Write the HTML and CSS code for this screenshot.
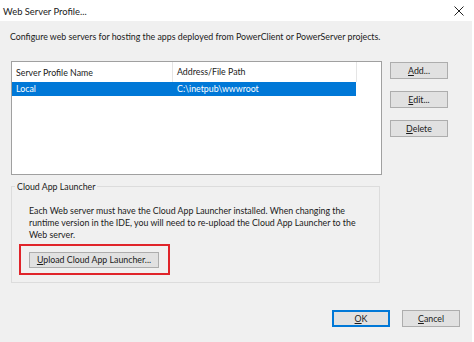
FILE: index.html
```html
<!DOCTYPE html>
<html lang="en">

<head>
    <meta charset="UTF-8">
    <title>Web Server Profile...</title>
    <link rel="stylesheet" href="styles.css">
</head>

<body>
    <div class="window">
        <div class="titlebar">
            <span class="title">Web Server Profile...</span>
            <svg class="close" width="10" height="10" viewBox="0 0 10 10">
                <path d="M0.5 0.5 L9.5 9.5 M9.5 0.5 L0.5 9.5" stroke="#222" stroke-width="1" fill="none" />
            </svg>
        </div>

        <div class="content">
            <p class="intro">Configure web servers for hosting the apps deployed from PowerClient or PowerServer projects.</p>

            <div class="top">
                <div class="list">
                    <div class="list-head">
                        <div class="col col-name">Server Profile Name</div>
                        <div class="col col-path">Address/File Path</div>
                    </div>
                    <div class="list-row selected">
                        <div class="col col-name">Local</div>
                        <div class="col col-path">C:\inetpub\wwwroot</div>
                    </div>
                </div>

                <div class="side">
                    <button class="btn"><u>A</u>dd...</button>
                    <button class="btn"><u>E</u>dit...</button>
                    <button class="btn"><u>D</u>elete</button>
                </div>
            </div>

            <fieldset class="group">
                <legend>Cloud App Launcher</legend>
                <p class="group-text">Each Web server must have the Cloud App Launcher installed. When changing the runtime version in the IDE, you will need to re-upload the Cloud App Launcher to the Web server.</p>
                <div class="highlight">
                    <button class="btn btn-wide"><u>U</u>pload Cloud App Launcher...</button>
                </div>
            </fieldset>

            <div class="footer">
                <button class="btn btn-default"><u>O</u>K</button>
                <button class="btn"><u>C</u>ancel</button>
            </div>
        </div>
    </div>
</body>

</html>
```

FILE: styles.css
```css
/* general */

body {
    margin: 0;
    background: #fff;
    font-family: 'Lato', 'Open Sans', sans-serif;
    font-size: 8.8px;
    color: #1a1a1a;
}

.window {
    width: 472px;
    height: 342px;
    background: #f0f0f0;
    display: flex;
    flex-direction: column;
}

.titlebar {
    height: 21px;
    flex-shrink: 0;
    background: #fff;
    display: flex;
    align-items: center;
    justify-content: space-between;
    padding: 1px 8px 0 3px;
    box-sizing: border-box;
}

.title {
    font-size: 9.4px;
}

.content {
    padding: 0 11px;
    flex: 1;
    display: flex;
    flex-direction: column;
}

.intro {
    margin: 10px 0 0 -1px;
    line-height: 12px;
    white-space: nowrap;
}

/* list and side buttons */

.top {
    display: flex;
    margin-top: 18px;
}

.list {
    width: 369px;
    height: 112px;
    background: #fff;
    border: 1px solid #a0a0a0;
}

.list-head,
.list-row {
    display: flex;
}

.list-head {
    height: 20px;
    align-items: center;
}

.list-head .col-path {
    border-left: 1px solid #e5e5e5;
    border-right: 1px solid #e5e5e5;
    height: 20px;
    line-height: 20px;
    padding-left: 4px;
    width: 179px;
}

.list-row {
    height: 14px;
    line-height: 14px;
    width: 344px;
}

.selected {
    background: #0078d7;
    color: #fff;
}

.col-name {
    width: 156px;
    padding-left: 4px;
}

.list-row .col-path {
    padding-left: 5px;
}

.side {
    display: flex;
    flex-direction: column;
    gap: 12px;
    margin-left: 8px;
    margin-top: 1px;
}

.btn {
    width: 58px;
    height: 17px;
    padding: 0;
    background: #e1e1e1;
    border: 1px solid #adadad;
    font-family: inherit;
    font-size: 8.8px;
    color: #1a1a1a;
    line-height: 14px;
}

.btn-default {
    border: 2px solid #0078d7;
    width: 58px;
}

/* group box */

.group {
    margin: 6px 0 0;
    padding: 0;
    width: 369px;
    height: 102px;
    box-sizing: border-box;
    border: 1px solid #dcdcdc;
}

.group legend {
    padding: 0 2px;
    margin-left: 3px;
}

.group-text {
    margin: 13px 0 0 17px;
    line-height: 12px;
    width: 332px;
}

.highlight {
    margin: 3px 0 0 7px;
    width: 139px;
    height: 27px;
    border: 2px solid #e0242a;
    display: flex;
    align-items: center;
    padding-left: 8px;
}

.btn-wide {
    width: 130px;
    height: 16px;
}

/* footer */

.footer {
    display: flex;
    justify-content: flex-end;
    gap: 12px;
    margin-top: 27px;
    padding-right: 1px;
}
```
